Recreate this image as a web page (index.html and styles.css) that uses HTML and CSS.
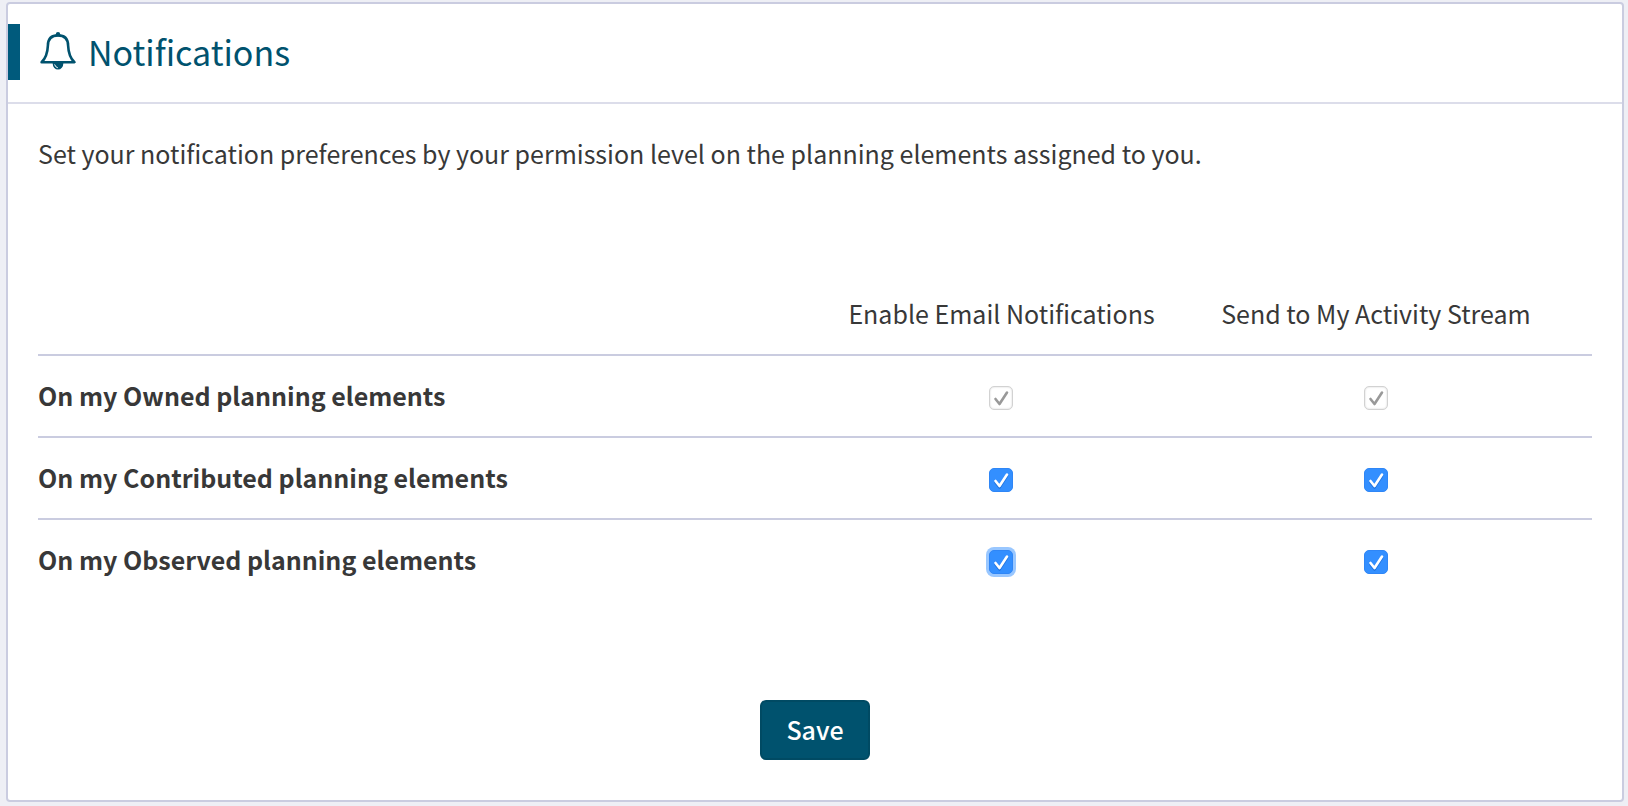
FILE: index.html
```html
<!DOCTYPE html>
<html lang="en">
<head>
  <meta charset="UTF-8" />
  <meta name="viewport" content="width=device-width, initial-scale=1.0"/>
  <title>Notifications</title>
  <link rel="stylesheet" href="styles.css">
</head>
<body>
  <form class="panel">
    <div class="panel-header">
      <h1 class="panel-title">
        <svg class="bell" viewBox="0 0 36 40" aria-hidden="true">
          <path d="M1.6 30.2 C5.5 26.5 7.6 20.5 7.9 13.5 C8 6.5 12 3.4 18 3.4 C24 3.4 28 6.5 28.1 13.5 C28.4 20.5 30.5 26.5 34.4 30.2 Z" fill="none" stroke="currentColor" stroke-width="2.6" stroke-linejoin="round"/>
          <circle cx="18" cy="2.2" r="2.2" fill="currentColor"/>
          <path d="M12.6 31 a5.4 6.6 0 0 0 10.8 0 Z" fill="currentColor"/>
          <path d="M14.6 32.4 q.7 2.8 3.2 3.4" fill="none" stroke="#fff" stroke-width="1"/>
        </svg>
        Notifications
      </h1>
    </div>

    <div class="panel-body">
      <p class="intro">Set your notification preferences by your permission level on the planning elements assigned to you.</p>

      <table class="prefs">
        <thead>
          <tr>
            <td class="col-name"></td>
            <th class="col-email" id="email" scope="col">Enable Email Notifications</th>
            <th class="col-stream" id="stream" scope="col">Send to My Activity Stream</th>
          </tr>
        </thead>
        <tbody>
          <tr>
            <th class="row-name" id="owned" scope="row">On my Owned planning elements</th>
            <td><input class="check" type="checkbox" aria-labelledby="owned email" checked disabled></td>
            <td class="col-stream"><input class="check" type="checkbox" aria-labelledby="owned stream" checked disabled></td>
          </tr>
          <tr>
            <th class="row-name" id="contributed" scope="row">On my Contributed planning elements</th>
            <td><input class="check" type="checkbox" aria-labelledby="contributed email" checked></td>
            <td class="col-stream"><input class="check" type="checkbox" aria-labelledby="contributed stream" checked></td>
          </tr>
          <tr>
            <th class="row-name" id="observed" scope="row">On my Observed planning elements</th>
            <td><input class="check" type="checkbox" aria-labelledby="observed email" checked autofocus></td>
            <td class="col-stream"><input class="check" type="checkbox" aria-labelledby="observed stream" checked></td>
          </tr>
        </tbody>
      </table>

      <div class="actions">
        <button class="save-btn" type="submit">Save</button>
      </div>
    </div>
  </form>
</body>
</html>
```
FILE: styles.css
```css
* {
  box-sizing: border-box;
}

body {
  margin: 0;
  padding: 2px 4px 4px 6px;
  background: #eeeff5;
  color: #383838;
  font-family: "Noto Sans CJK SC", "Noto Sans", sans-serif;
  font-size: 25px;
  line-height: 38px;
}

.panel {
  background: #fff;
  border: 2px solid #cacce0;
  border-radius: 4px;
}

.panel-header {
  padding: 20px 0 22px;
  border-bottom: 2px solid #dcddea;
}

.panel-title {
  display: flex;
  align-items: center;
  gap: 12px;
  margin: 0;
  padding-left: 20px;
  border-left: 12px solid #005a7c;
  color: #00526e;
  font-size: 34px;
  font-weight: 400;
  line-height: 56px;
}

.bell {
  width: 36px;
  height: 40px;
}

.panel-body {
  padding: 30px 30px 40px;
}

.intro {
  margin: 0 0 102px;
}

.prefs {
  width: 100%;
  table-layout: fixed;
  border-collapse: collapse;
  text-align: center;
}

.prefs th,
.prefs td {
  padding: 20px 0 22px;
}

.prefs thead th {
  font-weight: 400;
}

.prefs tbody tr {
  border-top: 2px solid #cacce0;
}

.prefs .row-name {
  font-weight: 700;
  text-align: left;
}

.col-name {
  width: 50%;
}

.col-email {
  width: 24%;
}

.prefs .col-stream {
  width: 26%;
  padding-right: 28px;
}

.check {
  appearance: none;
  display: block;
  width: 24px;
  height: 24px;
  margin: 6px auto 0;
  border: 1px solid #2f86f6;
  border-radius: 5px;
  background: #338fff url("data:image/svg+xml,%3Csvg xmlns='http://www.w3.org/2000/svg' viewBox='0 0 24 24' fill='none' stroke-width='2.6' stroke-linecap='round' stroke-linejoin='round'%3E%3Cpath d='M6.5 14.5l4 5L18 8' stroke='%231f74e0'/%3E%3Cpath d='M6.5 13l4 5L18 6.5' stroke='%23fff'/%3E%3C/svg%3E") center / 24px 24px;
}

.check:focus {
  outline: none;
  box-shadow: 0 0 0 3px #99c7ff;
}

.check:disabled {
  border: 1px solid #d2d2d2;
  background: #fff url("data:image/svg+xml,%3Csvg xmlns='http://www.w3.org/2000/svg' viewBox='0 0 24 24' fill='none' stroke='%23999' stroke-width='2.6' stroke-linecap='round' stroke-linejoin='round'%3E%3Cpath d='M6.5 13l4 5L18 6.5'/%3E%3C/svg%3E") center / 24px 24px;
  box-shadow: inset 0 0 2px #ccc;
}

.actions {
  margin-top: 100px;
}

.save-btn {
  display: block;
  height: 60px;
  margin: 0 auto;
  padding: 0 24px 2px;
  border: 2px solid #004a63;
  border-radius: 6px;
  background: #00526e;
  color: #fff;
  font: inherit;
  font-weight: 500;
}
```
